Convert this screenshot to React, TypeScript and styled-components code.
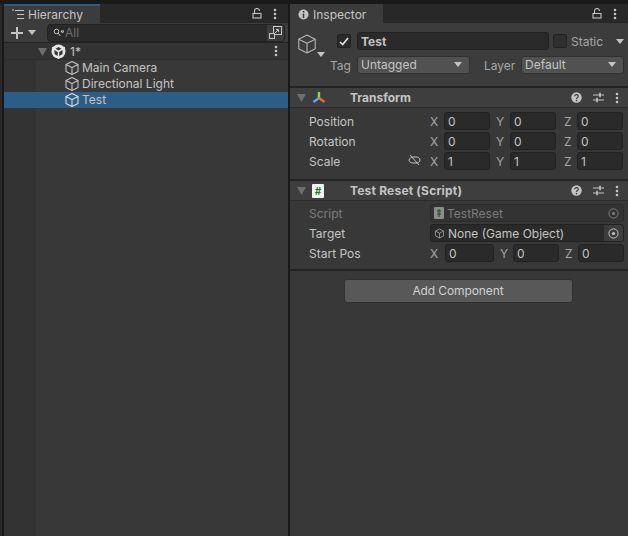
import React from 'react';
import styled, { createGlobalStyle } from 'styled-components';

const GlobalStyle = createGlobalStyle`
  html, body { margin: 0; padding: 0; background: #191919; }
  body { font-family: Inter, "Noto Sans", "Liberation Sans", sans-serif; font-size: 12px; color: #c4c4c4; }
  * { box-sizing: border-box; }
`;

const CubeIcon = ({ size = 16, color = '#c4c4c4' }: { size?: number; color?: string }) => (
  <svg width={size} height={size} viewBox="0 0 16 16" fill="none" stroke={color} strokeWidth={size > 16 ? 0.8 : 1.1} strokeLinejoin="round">
    <path d="M8 1.5 14 4.5V11.5L8 14.5 2 11.5V4.5Z" />
    <path d="M2 4.5 8 7.5 14 4.5M8 7.5V14.5" />
  </svg>
);

const LockIcon = () => (
  <svg width="10" height="11" viewBox="0 0 10 11" fill="none" stroke="#c4c4c4" strokeWidth="1.1">
    <rect x="1" y="5.5" width="8" height="4.5" />
    <path d="M2.5 5.5V3a2.5 2.5 0 0 1 5 0" />
  </svg>
);

const Kebab = () => (
  <svg width="4" height="12" viewBox="0 0 4 12" fill="#c4c4c4">
    <circle cx="2" cy="2" r="1.3" />
    <circle cx="2" cy="6" r="1.3" />
    <circle cx="2" cy="10" r="1.3" />
  </svg>
);

const Caret = ({ color = '#c4c4c4' }: { color?: string }) => (
  <svg width="8" height="5" viewBox="0 0 8 5" fill={color}>
    <path d="M0 0H8L4 5Z" />
  </svg>
);

const Foldout = () => (
  <svg width="9" height="9" viewBox="0 0 9 9" fill="#6e6e6e">
    <path d="M0 1H9L4.5 9Z" />
  </svg>
);

const HelpIcon = () => (
  <svg width="11" height="11" viewBox="0 0 11 11">
    <circle cx="5.5" cy="5.5" r="5.2" fill="#c4c4c4" />
    <path d="M3.7 4.2a1.8 1.6 0 1 1 2.6 1.5c-.6.3-.8.5-.8 1.2" fill="none" stroke="#383838" strokeWidth="1.2" />
    <circle cx="5.5" cy="8.6" r=".8" fill="#383838" />
  </svg>
);

const PresetIcon = () => (
  <svg width="11" height="11" viewBox="0 0 11 11" fill="none" stroke="#c4c4c4" strokeWidth="1.2">
    <path d="M0 3H11M0 8H11" />
    <path d="M7 .8V5.2M4 5.8V10.2" strokeWidth="1.6" />
  </svg>
);

const TargetDot = ({ dim }: { dim?: boolean }) => (
  <svg width="11" height="11" viewBox="0 0 11 11" fill="none" stroke={dim ? '#7c7c7c' : '#c4c4c4'}>
    <circle cx="5.5" cy="5.5" r="4.6" />
    <circle cx="5.5" cy="5.5" r="1.6" fill={dim ? '#7c7c7c' : '#c4c4c4'} stroke="none" />
  </svg>
);

const Page = styled.div`
  width: 628px;
  height: 536px;
  overflow: hidden;
  display: flex;
  padding-top: 4px;
  background: #191919;
`;

const Gutter = styled.div`
  width: 4px;
  border-left: 2px solid #282828;
  background: #191919;
`;

const Panel = styled.section<{ $width: number; $gap?: number }>`
  width: ${(p) => p.$width}px;
  margin-right: ${(p) => p.$gap ?? 0}px;
  display: flex;
  flex-direction: column;
  background: #383838;
`;

const TabBar = styled.div`
  height: 19px;
  flex: none;
  display: flex;
  align-items: center;
  background: #282828;
`;

const Tab = styled.div<{ $width: number; $accent?: boolean }>`
  width: ${(p) => p.$width}px;
  height: 19px;
  display: flex;
  align-items: center;
  gap: 3px;
  padding-left: 8px;
  padding-top: ${(p) => (p.$accent ? 0 : 2)}px;
  background: #3c3c3c;
  border-top: ${(p) => (p.$accent ? '2px solid #2c5d87' : 'none')};
  color: #c4c4c4;
`;

const TabActions = styled.div`
  margin-left: auto;
  display: flex;
  align-items: center;
  gap: 11px;
  padding-right: 11px;
`;

const Toolbar = styled.div`
  height: 20px;
  flex: none;
  display: flex;
  align-items: center;
  padding: 0 3px 0 7px;
  background: #3c3c3c;
  border-bottom: 1px solid #232323;
`;

const PlusGroup = styled.div`
  width: 36px;
  display: flex;
  align-items: center;
  gap: 5px;
`;

const SearchField = styled.div`
  flex: 1;
  height: 18px;
  display: flex;
  align-items: center;
  gap: 1px;
  padding-left: 5px;
  border-radius: 4px;
  background: #2a2a2a;
  border: 1px solid #212121;
  color: #707070;
  overflow: hidden;
`;

const SearchButton = styled.div`
  width: 17px;
  height: 16px;
  margin-left: auto;
  display: flex;
  align-items: center;
  justify-content: center;
  background: #3c3c3c;
`;

const Tree = styled.div`
  flex: 1;
  background: linear-gradient(to right, #333333 32px, #383838 32px);
`;

const SceneRow = styled.div`
  height: 17px;
  display: flex;
  align-items: center;
  padding: 0 10px 0 34px;
  background: #333333;
  border-bottom: 1px solid #2c2c2c;
  gap: 4px;
  color: #c4c4c4;
`;

const SceneName = styled.span`
  flex: 1;
`;

const TreeRow = styled.div<{ $selected?: boolean }>`
  height: 16px;
  display: flex;
  align-items: center;
  gap: 2px;
  padding: 0 0 1px 60px;
  color: #c4c4c4;
  background: ${(p) => (p.$selected ? '#2c5d87' : 'transparent')};
`;

const ObjectHeader = styled.div`
  height: 65px;
  flex: none;
  display: grid;
  grid-template-columns: 41px 1fr;
  padding: 9px 4px 0 6px;
  border-bottom: 2px solid #232323;
  background: #3c3c3c;
`;

const BigIcon = styled.div`
  position: relative;
  height: 24px;
  padding-top: 1px;
`;

const BigIconCaret = styled.div`
  position: absolute;
  left: 21px;
  top: 20px;
  line-height: 0;
`;

const HeaderRows = styled.div`
  display: flex;
  flex-direction: column;
  gap: 6px;
`;

const HeaderRow = styled.div`
  display: flex;
  align-items: center;
  height: 18px;
`;

const Check = styled.div<{ $on?: boolean; $left?: number }>`
  width: 14px;
  height: 14px;
  flex: none;
  margin-left: ${(p) => p.$left ?? 0}px;
  border-radius: 2px;
  display: flex;
  align-items: center;
  justify-content: center;
  background: ${(p) => (p.$on ? '#2a2a2a' : '#2f2f2f')};
  border: 1px solid #212121;
`;

const NameField = styled.div`
  width: 192px;
  height: 18px;
  margin-left: 6px;
  padding-left: 3px;
  display: flex;
  align-items: center;
  border-radius: 3px;
  background: #2a2a2a;
  border: 1px solid #212121;
  font-weight: 700;
  color: #c4c4c4;
`;

const Dim = styled.span<{ $left?: number; $width?: number }>`
  color: #a6a6a6;
  margin-left: ${(p) => p.$left ?? 0}px;
  width: ${(p) => (p.$width ? `${p.$width}px` : 'auto')};
  flex: none;
`;

const StaticCaret = styled.div`
  margin-left: 13px;
  line-height: 0;
`;

const Popup = styled.div<{ $width: number }>`
  width: ${(p) => p.$width}px;
  height: 18px;
  flex: none;
  display: flex;
  align-items: center;
  justify-content: space-between;
  padding: 0 7px 1px 3px;
  border-radius: 3px;
  background: #515151;
  border: 1px solid #303030;
  color: #c4c4c4;
`;

const ComponentHeader = styled.div`
  height: 20px;
  flex: none;
  display: grid;
  grid-template-columns: 15px 38px 1fr auto;
  align-items: center;
  padding: 0 9px 0 7px;
  background: #3e3e3e;
  border-bottom: 1px solid #2c2c2c;
`;

const HeaderTitle = styled.span<{ $tracking?: number }>`
  font-weight: 700;
  letter-spacing: ${(p) => p.$tracking ?? 0}px;
`;

const HeaderActions = styled.div`
  display: flex;
  align-items: center;
  gap: 11px;
  line-height: 0;
`;

const Body = styled.div<{ $height: number; $top: number }>`
  height: ${(p) => p.$height}px;
  flex: none;
  padding: ${(p) => p.$top}px 4px 0 19px;
  display: flex;
  flex-direction: column;
  gap: 2px;
  border-bottom: 2px solid #232323;
`;

const PropRow = styled.div`
  height: 18px;
  flex: none;
  display: flex;
  align-items: center;
`;

const PropLabel = styled.div<{ $disabled?: boolean }>`
  width: 121px;
  flex: none;
  position: relative;
  color: ${(p) => (p.$disabled ? '#7c7c7c' : '#c4c4c4')};
`;

const LinkIcon = styled.div`
  position: absolute;
  right: 9px;
  top: 0;
  line-height: 0;
`;

const Axis = styled.span<{ $width: number }>`
  width: ${(p) => p.$width}px;
  flex: none;
  color: #a6a6a6;
`;

const NumberField = styled.div<{ $width: number; $gap?: number }>`
  width: ${(p) => p.$width}px;
  height: 18px;
  flex: none;
  display: flex;
  align-items: center;
  padding-left: 3px;
  margin-right: ${(p) => p.$gap ?? 0}px;
  border-radius: 3px;
  background: #2a2a2a;
  border: 1px solid #212121;
  color: #c4c4c4;
`;

const ObjectField = styled.div<{ $disabled?: boolean }>`
  width: 194px;
  height: 18px;
  flex: none;
  display: flex;
  align-items: center;
  gap: 3px;
  padding-left: 3px;
  border-radius: 3px;
  background: ${(p) => (p.$disabled ? '#333333' : '#2a2a2a')};
  border: 1px solid ${(p) => (p.$disabled ? '#2c2c2c' : '#212121')};
  color: ${(p) => (p.$disabled ? '#7c7c7c' : '#c4c4c4')};
  overflow: hidden;
`;

const PickerButton = styled.div<{ $ghost?: boolean }>`
  width: 19px;
  height: 16px;
  margin-left: auto;
  display: flex;
  align-items: center;
  justify-content: center;
  background: ${(p) => (p.$ghost ? 'transparent' : '#3c3c3c')};
`;

const ScriptBadge = styled.div`
  width: 12px;
  height: 14px;
  display: flex;
  align-items: center;
  justify-content: center;
  border-radius: 1px;
  background: #f2f2f2;
  color: #1f7a2c;
  font-size: 10px;
  font-weight: 700;
`;

const ButtonRow = styled.div`
  display: flex;
  justify-content: center;
  padding: 8px 2px 0 0;
`;

const AddButton = styled.button`
  width: 229px;
  height: 24px;
  padding: 0 0 2px;
  font: inherit;
  letter-spacing: -0.1px;
  color: #d0d0d0;
  background: #585858;
  border: 1px solid #303030;
  border-radius: 3px;
`;

const vectors = [
  { name: 'Position', v: ['0', '0', '0'] },
  { name: 'Rotation', v: ['0', '0', '0'] },
  { name: 'Scale', v: ['1', '1', '1'], link: true },
];

const App: React.FC = () => (
  <Page>
    <GlobalStyle />
    <Gutter />
    <Panel $width={284} $gap={2}>
      <TabBar>
        <Tab $width={96} $accent>
          <svg width="13" height="11" viewBox="0 0 13 11" stroke="#c4c4c4" fill="none">
            <path d="M3 1.5H12M5 5.5H12M5 9.5H12M1 0V2" />
          </svg>
          Hierarchy
        </Tab>
        <TabActions>
          <LockIcon />
          <Kebab />
        </TabActions>
      </TabBar>
      <Toolbar>
        <PlusGroup>
          <svg width="12" height="12" viewBox="0 0 12 12" fill="#c4c4c4">
            <path d="M5 0H7V5H12V7H7V12H5V7H0V5H5Z" />
          </svg>
          <Caret />
        </PlusGroup>
        <SearchField>
          <svg width="11" height="9" viewBox="0 0 11 9" fill="none" stroke="#c4c4c4">
            <circle cx="3.5" cy="3.5" r="2.3" />
            <path d="M5 5 7.5 8M8 3h3L9.5 5Z" />
          </svg>
          All
          <SearchButton>
            <svg width="13" height="13" viewBox="0 0 13 13" fill="none" stroke="#c4c4c4">
              <rect x="4.5" y=".5" width="8" height="8" />
              <rect x=".5" y="7.5" width="5" height="5" fill="#3c3c3c" />
              <path d="M6 7 9 4M7 3.5H9.5V6" />
            </svg>
          </SearchButton>
        </SearchField>
      </Toolbar>
      <SceneRow>
        <Foldout />
        <svg width="15" height="15" viewBox="0 0 15 15">
          <circle cx="7.5" cy="7.5" r="7" fill="#e4e4e4" />
          <path d="M7.5 3 11.5 5.5V10L7.5 12.5 3.5 10V5.5Z" fill="#333333" />
          <path d="M7.5 7.5V15M7.5 7.5 1 3.5M7.5 7.5 14 3.5" stroke="#e4e4e4" strokeWidth="1.5" />
        </svg>
        <SceneName>1*</SceneName>
        <Kebab />
      </SceneRow>
      <Tree>
        <TreeRow>
          <CubeIcon />
          Main Camera
        </TreeRow>
        <TreeRow>
          <CubeIcon />
          Directional Light
        </TreeRow>
        <TreeRow $selected>
          <CubeIcon color="#dddddd" />
          Test
        </TreeRow>
      </Tree>
    </Panel>
    <Panel $width={338}>
      <TabBar>
        <Tab $width={93}>
          <svg width="12" height="11" viewBox="0 0 12 11">
            <circle cx="5.5" cy="5.5" r="5" fill="#c4c4c4" />
            <path d="M4.7 4.5H6.3V9H4.7ZM4.7 2H6.3V3.5H4.7Z" fill="#3c3c3c" />
          </svg>
          Inspector
        </Tab>
        <TabActions>
          <LockIcon />
          <Kebab />
        </TabActions>
      </TabBar>
      <ObjectHeader>
        <BigIcon>
          <CubeIcon size={22} color="#b4b4b4" />
          <BigIconCaret>
            <Caret />
          </BigIconCaret>
        </BigIcon>
        <HeaderRows>
          <HeaderRow>
            <Check $on>
              <svg width="10" height="9" viewBox="0 0 10 9" fill="none" stroke="#e4e4e4" strokeWidth="1.6">
                <path d="M1 5 3.7 7.5 9 1" />
              </svg>
            </Check>
            <NameField>Test</NameField>
            <Check $left={4} />
            <Dim $left={4}>Static</Dim>
            <StaticCaret>
              <Caret />
            </StaticCaret>
          </HeaderRow>
          <HeaderRow>
            <Dim $left={-7} $width={27}>Tag</Dim>
            <Popup $width={113}>
              Untagged
              <Caret />
            </Popup>
            <Dim $left={14} $width={37}>Layer</Dim>
            <Popup $width={103}>
              Default
              <Caret />
            </Popup>
          </HeaderRow>
        </HeaderRows>
      </ObjectHeader>
      <ComponentHeader>
        <Foldout />
        <svg width="14" height="14" viewBox="0 0 14 14" fill="none" strokeWidth="2.4">
          <path d="M7 7V1" stroke="#9ed63a" />
          <path d="M7 7 1.5 11" stroke="#5aa9e6" />
          <path d="M7 7 12.5 11" stroke="#e8683c" />
        </svg>
        <HeaderTitle>Transform</HeaderTitle>
        <HeaderActions>
          <HelpIcon />
          <PresetIcon />
          <Kebab />
        </HeaderActions>
      </ComponentHeader>
      <Body $height={73} $top={4}>
        {vectors.map((row) => (
          <PropRow key={row.name}>
            <PropLabel>
              {row.name}
              {row.link && (
                <LinkIcon>
                  <svg width="13" height="12" viewBox="0 0 13 12" fill="none" stroke="#c4c4c4">
                    <path d="M1 6c1.5-3 3-3 4-3h3c2 0 4 1 4 3s-2 3-4 3H5C3 9 1 8 1 6ZM2 1l9 10" />
                  </svg>
                </LinkIcon>
              )}
            </PropLabel>
            <Axis $width={14}>X</Axis>
            <NumberField $width={46} $gap={6}>{row.v[0]}</NumberField>
            <Axis $width={14}>Y</Axis>
            <NumberField $width={46} $gap={8}>{row.v[1]}</NumberField>
            <Axis $width={13}>Z</Axis>
            <NumberField $width={46}>{row.v[2]}</NumberField>
          </PropRow>
        ))}
      </Body>
      <ComponentHeader>
        <Foldout />
        <ScriptBadge>#</ScriptBadge>
        <HeaderTitle $tracking={0.2}>Test Reset (Script)</HeaderTitle>
        <HeaderActions>
          <HelpIcon />
          <PresetIcon />
          <Kebab />
        </HeaderActions>
      </ComponentHeader>
      <Body $height={70} $top={3}>
        <PropRow>
          <PropLabel $disabled>Script</PropLabel>
          <ObjectField $disabled>
            <svg width="10" height="12" viewBox="0 0 10 12">
              <rect width="10" height="12" rx="1" fill="#8c8c8c" />
              <path d="M5 2V10M3 4H7M3 7H7" stroke="#3a5a3e" strokeWidth="1.5" />
            </svg>
            TestReset
            <PickerButton $ghost>
              <TargetDot dim />
            </PickerButton>
          </ObjectField>
        </PropRow>
        <PropRow>
          <PropLabel>Target</PropLabel>
          <ObjectField>
            <CubeIcon size={11} color="#aaaaaa" />
            None (Game Object)
            <PickerButton>
              <TargetDot />
            </PickerButton>
          </ObjectField>
        </PropRow>
        <PropRow>
          <PropLabel>Start Pos</PropLabel>
          <Axis $width={15}>X</Axis>
          <NumberField $width={49} $gap={6}>0</NumberField>
          <Axis $width={13}>Y</Axis>
          <NumberField $width={46} $gap={6}>0</NumberField>
          <Axis $width={13}>Z</Axis>
          <NumberField $width={46}>0</NumberField>
        </PropRow>
      </Body>
      <ButtonRow>
        <AddButton>Add Component</AddButton>
      </ButtonRow>
    </Panel>
  </Page>
);

export default App;
